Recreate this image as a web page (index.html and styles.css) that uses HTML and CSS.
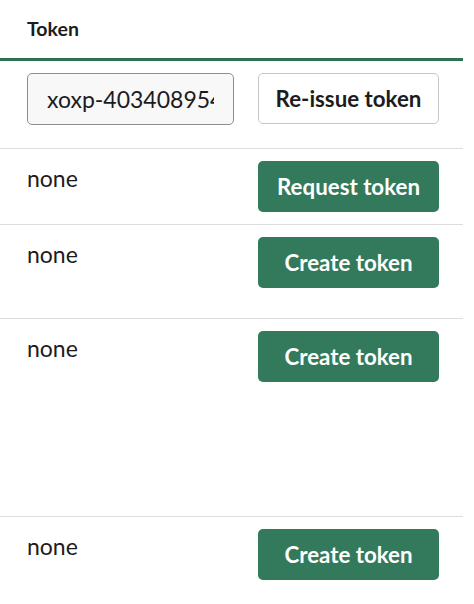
FILE: index.html
```html
<!DOCTYPE html>
<html lang="en">
<head>
<meta charset="utf-8">
<title>Token</title>
<link rel="stylesheet" href="styles.css">
</head>
<body>
<div class="table">
  <div class="head">Token</div>
  <div class="row row-1">
    <div class="cell-main">
      <div class="token-field"><span class="token-text">xoxp-4034089541</span></div>
    </div>
    <button class="btn btn-outline" type="button">Re-issue token</button>
  </div>
  <div class="row row-2">
    <div class="cell-main none">none</div>
    <button class="btn btn-green" type="button">Request token</button>
  </div>
  <div class="row row-3">
    <div class="cell-main none">none</div>
    <button class="btn btn-green" type="button">Create token</button>
  </div>
  <div class="row row-4">
    <div class="cell-main none">none</div>
    <button class="btn btn-green" type="button">Create token</button>
  </div>
  <div class="row row-5">
    <div class="cell-main none">none</div>
    <button class="btn btn-green" type="button">Create token</button>
  </div>
</div>
</body>
</html>
```

FILE: styles.css
```css
html, body {
  margin: 0;
  padding: 0;
  background: #ffffff;
}
body {
  font-family: Lato, "Noto Sans", "Liberation Sans", sans-serif;
  color: #1d1c1d;
}
.table {
  width: 463px;
}
.head {
  box-sizing: border-box;
  height: 61px;
  padding: 16px 0 0 27px;
  font-size: 19.5px;
  line-height: 25px;
  font-weight: 700;
  border-bottom: 3px solid #2d7053;
}
.row {
  box-sizing: border-box;
  display: flex;
  align-items: flex-start;
  gap: 24px;
  padding: 12px 24px 0 27px;
  border-bottom: 1px solid #dddddd;
}
.row-1 { height: 88px; }
.row-2 { height: 76px; }
.row-3 { height: 94px; }
.row-4 { height: 198px; }
.row-5 { height: 100px; border-bottom: none; }
.cell-main {
  width: 207px;
  flex: none;
}
.none {
  font-size: 23px;
  line-height: 34px;
}
.token-field {
  box-sizing: border-box;
  display: flex;
  align-items: center;
  width: 207px;
  height: 52px;
  padding: 0 19px 0 19px;
  border: 1px solid #8e8e8e;
  border-radius: 5px;
  background: #f8f8f8;
}
.token-text {
  display: block;
  min-width: 0;
  overflow: hidden;
  white-space: nowrap;
  font-size: 23px;
  line-height: 30px;
  color: #1d1c1d;
}
.btn {
  box-sizing: border-box;
  flex: none;
  width: 181px;
  height: 51px;
  margin: 0;
  padding: 0;
  border-radius: 5px;
  font-family: Lato, "Noto Sans", sans-serif;
  font-size: 22.3px;
  font-weight: 700;
  cursor: pointer;
}
.btn-outline {
  background: #ffffff;
  color: #1d1c1d;
  border: 1px solid #c6c6c6;
}
.btn-green {
  background: #327a5b;
  color: #ffffff;
  border: none;
}
```
